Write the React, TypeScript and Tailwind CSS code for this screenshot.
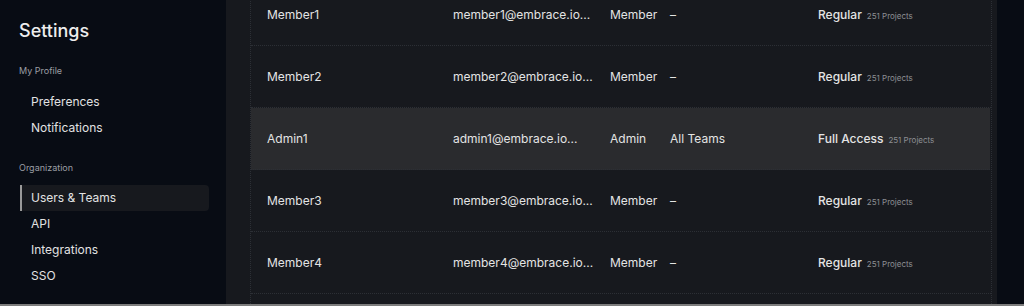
import React from 'react';

type Row = {
  name: string;
  email: string;
  role: string;
  team: string;
  access: string;
  active?: boolean;
};

const rows: Row[] = [
  { name: 'Member1', email: 'member1@embrace.io...', role: 'Member', team: '–', access: 'Regular' },
  { name: 'Member2', email: 'member2@embrace.io...', role: 'Member', team: '–', access: 'Regular' },
  { name: 'Admin1', email: 'admin1@embrace.io...', role: 'Admin', team: 'All Teams', access: 'Full Access', active: true },
  { name: 'Member3', email: 'member3@embrace.io...', role: 'Member', team: '–', access: 'Regular' },
  { name: 'Member4', email: 'member4@embrace.io...', role: 'Member', team: '–', access: 'Regular' },
];

const NavItem: React.FC<{ label: string; active?: boolean }> = ({ label, active }) => (
  <div
    className={
      active
        ? 'h-[26px] ml-[20px] mr-[17px] flex items-center pl-[9px] border-l-2 border-[#9a9a9a] rounded-r bg-[#17191e] text-[12px] text-[#e2e2e2]'
        : 'h-[26px] flex items-center pl-[31px] text-[12px] text-[#e2e2e2]'
    }
  >
    {label}
  </div>
);

const Sidebar: React.FC = () => (
  <aside className="w-[226px] shrink-0 bg-[#080c14] pt-[18px]">
    <h1 className="pl-[19px] text-[18px] leading-[26px] text-[#ededed] font-medium">Settings</h1>
    <div className="pl-[19px] mt-[21px] text-[9px] leading-[12px] text-[#9b9ea4]">My Profile</div>
    <div className="mt-[12px]">
      <NavItem label="Preferences" />
      <NavItem label="Notifications" />
    </div>
    <div className="pl-[19px] mt-[21px] text-[9px] leading-[12px] text-[#9b9ea4]">Organization</div>
    <div className="mt-[11px]">
      <NavItem label="Users & Teams" active />
      <NavItem label="API" />
      <NavItem label="Integrations" />
      <NavItem label="SSO" />
    </div>
  </aside>
);

const App: React.FC = () => {
  return (
    <div
      className="w-[1024px] h-[306px] flex overflow-hidden border-b-2 border-[#7d7d7d]"
      style={{ fontFamily: 'Inter, "Liberation Sans", sans-serif' }}
    >
      <Sidebar />
      <main className="flex-1 bg-[#17191e] pl-[24px] pr-[5px] overflow-hidden">
        <div className="-mt-[16px] h-[330px] border-l border-r border-dotted border-[#2c2f35]">
          {rows.map((r) => (
            <div
              key={r.name}
              className={
                'h-[62px] flex items-center border-b border-dotted border-[#2c2f35] text-[12px] text-[#e4e4e4] ' +
                (r.active ? 'bg-[#2a2b2e] mr-px' : '')
              }
            >
              <div className="w-[202px] pl-[16px]">{r.name}</div>
              <div className="w-[157px]">{r.email}</div>
              <div className="w-[60px]">{r.role}</div>
              <div className="w-[148px]">{r.team}</div>
              <div className="flex items-baseline gap-[5px]">
                <span className="font-medium">{r.access}</span>
                <span className="text-[8px] text-[#8d8f94]">251 Projects</span>
              </div>
            </div>
          ))}
        </div>
      </main>
      <div className="w-[27px] shrink-0 bg-[#080c14]" />
    </div>
  );
};

export default App;
